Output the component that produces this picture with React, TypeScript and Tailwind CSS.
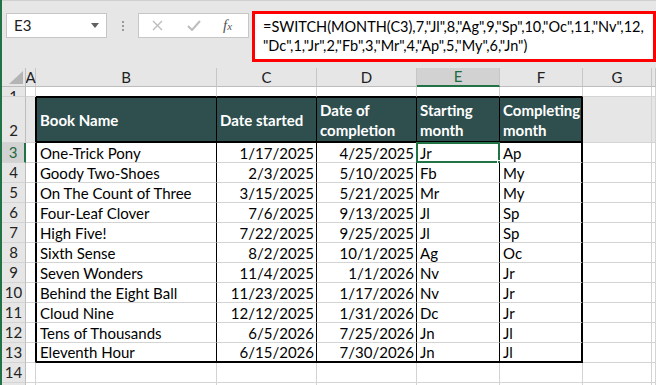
const font = { fontFamily: "Lato, 'Noto Sans', sans-serif" };

const rows: string[][] = [
  ["One-Trick Pony", "1/17/2025", "4/25/2025", "Jr", "Ap"],
  ["Goody Two-Shoes", "2/3/2025", "5/10/2025", "Fb", "My"],
  ["On The Count of Three", "3/15/2025", "5/21/2025", "Mr", "My"],
  ["Four-Leaf Clover", "7/6/2025", "9/13/2025", "Jl", "Sp"],
  ["High Five!", "7/22/2025", "9/25/2025", "Jl", "Sp"],
  ["Sixth Sense", "8/2/2025", "10/1/2025", "Ag", "Oc"],
  ["Seven Wonders", "11/4/2025", "1/1/2026", "Nv", "Jr"],
  ["Behind the Eight Ball", "11/23/2025", "1/17/2026", "Nv", "Jr"],
  ["Cloud Nine", "12/12/2025", "1/31/2026", "Dc", "Jr"],
  ["Tens of Thousands", "6/5/2026", "7/25/2026", "Jn", "Jl"],
  ["Eleventh Hour", "6/15/2026", "7/30/2026", "Jn", "Jl"],
];

const letters = ["A", "B", "C", "D", "E", "F", "G", ""];

function FormulaBar() {
  return (
    <div className="flex items-start h-[68px] pt-[12px] pl-[4px] border-t border-[#d0d0d0]">
      <div className="w-[101px] h-[25px] bg-white border border-[#c6c6c6] flex items-center justify-between pl-[7px] pr-[7px]">
        <span className="text-[15px] text-[#222]">E3</span>
        <svg width="8" height="5" viewBox="0 0 8 5">
          <path d="M0 0 L8 0 L4 5 Z" fill="#606060" />
        </svg>
      </div>
      <div className="w-[31px] h-[25px] flex flex-col items-center justify-center gap-[2px]">
        <span className="w-[2px] h-[2px] bg-[#9a9a9a]" />
        <span className="w-[2px] h-[2px] bg-[#9a9a9a]" />
        <span className="w-[2px] h-[2px] bg-[#9a9a9a]" />
      </div>
      <div className="w-[111px] h-[25px] bg-white border border-[#c6c6c6] flex items-center pl-[13px]">
        <svg width="11" height="11" viewBox="0 0 11 11">
          <path d="M1 1 L10 10 M10 1 L1 10" stroke="#bdbdbd" strokeWidth="1.4" />
        </svg>
        <svg width="14" height="11" viewBox="0 0 14 11" className="ml-[24px]">
          <path d="M1 6 L5 10 L13 1" stroke="#bdbdbd" strokeWidth="2" fill="none" />
        </svg>
        <span className="ml-[22px] italic text-[15px] text-[#555]" style={{ fontFamily: "'Liberation Serif', serif" }}>
          f<span className="text-[11px]">x</span>
        </span>
      </div>
      <div className="ml-[3px] -mt-[2px] w-[404px] h-[51px] bg-white border-[3px] border-[#ff0000] pl-[8px] pt-[3px] text-[14.5px] leading-[19px] text-black">
        =SWITCH(MONTH(C3),7,"Jl",8,"Ag",9,"Sp",10,"Oc",11,"Nv",12,
        <br />
        "Dc",1,"Jr",2,"Fb",3,"Mr",4,"Ap",5,"My",6,"Jn")
      </div>
    </div>
  );
}

function cellClass(r: number, c: number) {
  // r: 1..15 sheet row, c: 1..8 (A..H)
  const inTable = r >= 2 && r <= 13 && c >= 2 && c <= 6;
  let cls = "border-r border-b ";
  if (inTable) {
    cls += c === 6 ? "border-r-2 border-r-black " : "border-r-black ";
    cls += r === 2 || r === 13 ? "border-b-2 border-b-black " : "border-b-[#d4d4d4] ";
    if (r === 2) cls += "border-t border-t-black bg-[#2f4f4f] text-white font-bold ";
    if (c === 2) cls += "border-l border-l-black ";
  } else {
    cls += "border-[#d4d4d4] ";
    if (r === 1 && c >= 2 && c <= 6) cls += "border-b-black ";
    if (c === 1 && r >= 2 && r <= 13) cls += "border-r-black ";
  }
  return cls;
}

function Sheet() {
  const cells: React.ReactNode[] = [];
  // column header row
  cells.push(
    <div key="corner" className="bg-[#e6e6e6] border-r border-b border-[#bdbdbd] relative">
      <svg width="14" height="13" viewBox="0 0 14 13" className="absolute right-[2px] bottom-[2px]">
        <path d="M14 0 L14 13 L0 13 Z" fill="#b4b4b4" />
      </svg>
    </div>
  );
  letters.forEach((l, i) => {
    const sel = l === "E";
    cells.push(
      <div
        key={"h" + i}
        className={
          "flex items-center justify-center text-[15px] border-r border-[#c6c6c6] " +
          (sel ? "bg-[#d2d2d2] text-[#1e6b41] border-b-2 border-b-[#217346]" : "bg-[#e6e6e6] text-[#222] border-b border-b-[#bdbdbd]")
        }
      >
        {l}
      </div>
    );
  });

  for (let r = 1; r <= 15; r++) {
    const sel = r === 3;
    cells.push(
      <div
        key={"r" + r}
        className={
          "flex justify-center overflow-hidden text-[15px] border-b border-b-[#d4d4d4] " +
          (r === 2 ? "items-end pb-[1px] " : "items-center ") +
          (sel ? "bg-[#d2d2d2] text-[#1e6b41] border-r-2 border-r-[#217346]" : "bg-[#e6e6e6] text-[#222] border-r border-r-[#bdbdbd]")
        }
      >
        {r === 1 ? <span className="leading-[10px] -mb-[9px]">1</span> : r === 15 ? null : r}
      </div>
    );
    for (let c = 1; c <= 8; c++) {
      let content: React.ReactNode = null;
      let align = "justify-start pl-[3px]";
      if (r === 2) {
        const heads: React.ReactNode[] = [
          "Book Name",
          "Date started",
          <>Date of<br />completion</>,
          <>Starting<br />month</>,
          <>Completing<br />month</>,
        ];
        if (c >= 2 && c <= 6) content = heads[c - 2];
      } else if (r >= 3 && r <= 13 && c >= 2 && c <= 6) {
        content = rows[r - 3][c - 2];
        if (c === 3 || c === 4) align = "justify-end pr-[2px]";
      }
      cells.push(
        <div
          key={r + "-" + c}
          className={cellClass(r, c) + "flex items-center text-[15px] leading-[20px] whitespace-nowrap relative bg-clip-padding " + align + (r !== 2 ? " bg-white text-black" : "")}
        >
          <span>{content}</span>
          {r === 3 && c === 5 && (
            <>
              <div className="absolute -left-[1px] -top-[1px] -right-[1px] -bottom-[1px] border-2 border-[#217346]" />
              <div className="absolute -right-[4px] -bottom-[4px] w-[6px] h-[6px] bg-[#217346] border border-white" />
            </>
          )}
        </div>
      );
    }
  }

  return (
    <div className="grid grid-cols-[24px_10px_181px_100px_100px_83px_83px_69px_1fr] grid-rows-[19px_10px_46px_repeat(12,20px)_20px]">
      {cells}
    </div>
  );
}

export default function App() {
  return (
    <div className="w-[656px] h-[385px] overflow-hidden bg-[#e6e6e6] border-l-2 border-[#217346]" style={font}>
      <FormulaBar />
      <Sheet />
    </div>
  );
}
